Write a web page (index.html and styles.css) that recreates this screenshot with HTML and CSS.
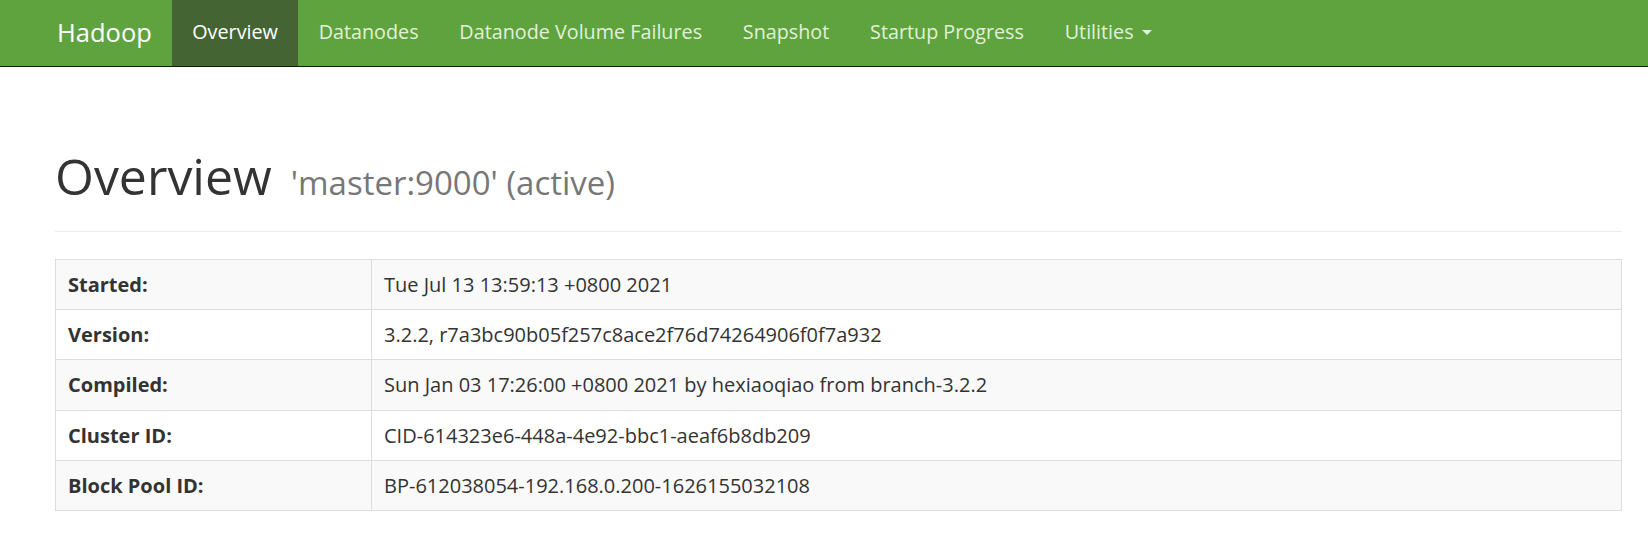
FILE: index.html
```html
<!DOCTYPE html>
<html>
<head>
<meta charset="utf-8">
<title>Namenode information</title>
<link rel="stylesheet" href="styles.css">
</head>
<body>
<header class="navbar">
  <div class="navbar-inner">
    <a class="brand" href="#">Hadoop</a>
    <ul class="nav">
      <li class="active"><a href="#">Overview</a></li>
      <li><a href="#">Datanodes</a></li>
      <li><a href="#">Datanode Volume Failures</a></li>
      <li><a href="#">Snapshot</a></li>
      <li><a href="#">Startup Progress</a></li>
      <li><a href="#">Utilities <b class="caret"></b></a></li>
    </ul>
  </div>
</header>
<main class="container">
  <div class="page-header">
    <h1>Overview <small>'master:9000' (active)</small></h1>
  </div>
  <table class="info-table">
    <colgroup><col class="label-col"><col></colgroup>
    <tbody>
      <tr><th>Started:</th><td>Tue Jul 13 13:59:13 +0800 2021</td></tr>
      <tr><th>Version:</th><td>3.2.2, r7a3bc90b05f257c8ace2f76d74264906f0f7a932</td></tr>
      <tr><th>Compiled:</th><td>Sun Jan 03 17:26:00 +0800 2021 by hexiaoqiao from branch-3.2.2</td></tr>
      <tr><th>Cluster ID:</th><td>CID-614323e6-448a-4e92-bbc1-aeaf6b8db209</td></tr>
      <tr><th>Block Pool ID:</th><td>BP-612038054-192.168.0.200-1626155032108</td></tr>
    </tbody>
  </table>
</main>
</body>
</html>
```
FILE: styles.css
```css
* { box-sizing: border-box; }
html, body {
  margin: 0;
  padding: 0;
  background: #fff;
  color: #333;
  font-family: "Open Sans", "Noto Sans", "DejaVu Sans", sans-serif;
}
a { text-decoration: none; }

.navbar {
  background: #5fa33e;
  height: 67px;
  border-bottom: 1px solid #0e1a08;
}
.navbar-inner {
  display: flex;
  align-items: stretch;
  height: 66px;
  padding-left: 57px;
}
.brand {
  display: block;
  color: #fff;
  font-size: 25.5px;
  line-height: 64px;
  padding-right: 20px;
}
.nav {
  display: flex;
  list-style: none;
  margin: 0;
  padding: 0;
}
.nav li a {
  display: block;
  height: 66px;
  line-height: 63px;
  padding: 0 20.4px;
  font-size: 19.75px;
  color: #e2f0da;
}
.nav li.active a {
  background: #446533;
  color: #fff;
}
.caret {
  display: inline-block;
  width: 0;
  height: 0;
  margin-left: 3px;
  vertical-align: middle;
  border-top: 5px solid;
  border-left: 5px solid transparent;
  border-right: 5px solid transparent;
  position: relative;
  top: -1px;
}

.container {
  padding: 0 26px 0 55px;
}
.page-header {
  margin-top: 82px;
  padding-bottom: 21px;
  border-bottom: 1px solid #eee;
  margin-bottom: 27px;
}
.page-header h1 {
  margin: 0;
  font-size: 50px;
  font-weight: 400;
  line-height: 55px;
  color: #333;
}
.page-header h1 small {
  font-size: 33px;
  color: #777;
  font-weight: 400;
  margin-left: 6px;
}

.info-table {
  width: 100%;
  table-layout: fixed;
  border-collapse: collapse;
  border: 1px solid #ddd;
  font-size: 20px;
}
.label-col {
  width: 316px;
}
.info-table th,
.info-table td {
  border: 1px solid #ddd;
  padding: 12px;
  line-height: 25.2px;
  text-align: left;
  vertical-align: top;
}
.info-table th {
  font-weight: 700;
}
.info-table tr:nth-child(odd) {
  background: #f9f9f9;
}
```
